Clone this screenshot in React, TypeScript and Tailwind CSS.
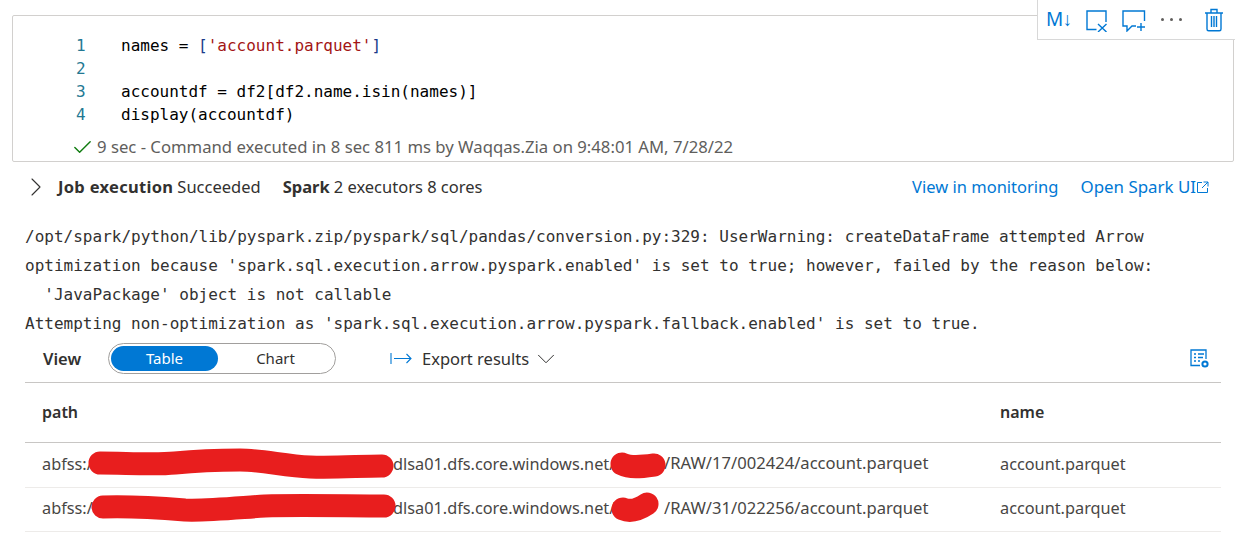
import { Check, ChevronDown, ChevronRight } from "lucide-react";

const sans = "font-['Noto_Sans',sans-serif]";
const mono = "font-['DejaVu_Sans_Mono',monospace]";

const outputLines = [
  "/opt/spark/python/lib/pyspark.zip/pyspark/sql/pandas/conversion.py:329: UserWarning: createDataFrame attempted Arrow",
  "optimization because 'spark.sql.execution.arrow.pyspark.enabled' is set to true; however, failed by the reason below:",
  "  'JavaPackage' object is not callable",
  "Attempting non-optimization as 'spark.sql.execution.arrow.pyspark.fallback.enabled' is set to true.",
];

const rows = [
  "/RAW/17/002424/account.parquet",
  "/RAW/31/022256/account.parquet",
];

function Toolbar() {
  return (
    <div className="absolute right-0 top-0 flex h-[40px] w-[198px] items-center border-b border-l border-[#d8d8d8] bg-white pl-[8px] text-[#0078d4]">
      <span className={`${sans} w-[26px] text-[19px] leading-none tracking-[-0.5px]`}>M↓</span>
      <svg className="ml-[14px]" width="22" height="24" viewBox="0 0 22 24" fill="none" stroke="currentColor" strokeWidth="1.4">
        <path d="M10.5 21.5H1V3h19v11" />
        <path d="M12 16l8.5 8M20.5 16L12 24" />
      </svg>
      <svg className="ml-[14px]" width="24" height="24" viewBox="0 0 24 24" fill="none" stroke="currentColor" strokeWidth="1.4">
        <path d="M22.5 13V3H1v15h4v5l5-5h4" />
        <path d="M15 19h8M19 15v8" />
      </svg>
      <span className="ml-[15px] flex w-[21px] justify-between">
        <i className="h-[3px] w-[3px] rounded-full bg-[#605e5c]" />
        <i className="h-[3px] w-[3px] rounded-full bg-[#605e5c]" />
        <i className="h-[3px] w-[3px] rounded-full bg-[#605e5c]" />
      </span>
      <svg className="ml-[22px]" width="20" height="24" viewBox="0 0 20 24" fill="none" stroke="currentColor" strokeWidth="1.4">
        <path d="M1 5h18M7 5V1.5h6V5M3 5v16c0 1 .6 1.8 1.6 1.8h10.800c1 0 1.600-.8 1.600-1.800V5M7.500 8v11M10 8v11M12.500 8v11" />
      </svg>
    </div>
  );
}

function Scribbles() {
  return (
    <svg className="absolute left-0 top-0" width="1235" height="554" viewBox="0 0 1235 554" fill="none" stroke="#e81e1e" strokeLinecap="round" strokeLinejoin="round">
      <path d="M100 463C125 463 155 465 175 463C195 461 215 460 240 460C262 460 285 466 310 467C335 468 360 466 382 466" strokeWidth="23" />
      <path d="M103 507C130 506 160 508 185 510C205 511 235 508 265 506C295 505 350 506 384 506" strokeWidth="23" />
      <path d="M622 464C630 468 640 467 654 465" strokeWidth="23" />
      <path d="M623 509C630 512 638 510 647 504" strokeWidth="23" />
    </svg>
  );
}

function CellPath({ tail }: { tail: string }) {
  return (
    <div className="flex h-full items-center pb-[2px] pl-[17px] text-[16.300px] text-[#484644]">
      <span className="w-[351px]">abfss:/</span>
      <span className="w-[271px]">dlsa01.dfs.core.windows.net/</span>
      <span className="text-[16.600px]">{tail}</span>
    </div>
  );
}

export default function App() {
  return (
    <div className={`${sans} relative h-[554px] w-[1235px] overflow-hidden bg-white`}>
      <div className="pl-[12px] pr-px pt-[15px]">
        <div className="h-[147px] rounded-[2px] border border-[#d2d0ce] pt-[18px]">
          <div className={`${mono} text-[16px] leading-[23px] text-black`}>
            {[1, 2, 3, 4].map((n) => (
              <div key={n} className="flex h-[23px]">
                <span className="w-[108px] pl-[63px] text-[#237893]">{n}</span>
                {n === 1 && (
                  <span>
                    names = <span className="text-[#1a3a8a]">[</span>
                    <span className="text-[#a31515]">'account.parquet'</span>
                    <span className="text-[#1a3a8a]">]</span>
                  </span>
                )}
                {n === 3 && <span>accountdf = df2[df2.name.isin(names)]</span>}
                {n === 4 && <span>display(accountdf)</span>}
              </div>
            ))}
          </div>
          <div className="mt-[9px] flex h-[24px] items-center pl-[58px] text-[16.700px] text-[#605e5c]">
            <Check size={23} strokeWidth={1.5} className="mr-[3px] text-[#107c10]" />
            <span>9 sec - Command executed in 8 sec 811 ms by Waqqas.Zia on 9:48:01 AM, 7/28/22</span>
          </div>
        </div>
      </div>

      <div className="mt-[12px] flex h-[26px] items-center pl-[20px] text-[16.500px] text-[#323130]">
        <ChevronRight size={32} strokeWidth={0.8} className="mr-[6px] text-[#323130]" />
        <b className="font-bold tracking-[0.3px]">Job execution</b>
        <span className="ml-[4px]">Succeeded</span>
        <b className="ml-[22px] font-bold">Spark</b>
        <span className="ml-[4px]">2 executors 8 cores</span>
        <span className="ml-auto text-[#0078d4]">View in monitoring</span>
        <span className="ml-[22px] text-[16.900px] text-[#0078d4]">Open Spark UI</span>
        <svg className="mr-[26px]" width="13" height="13" viewBox="0 0 13 13" fill="none" stroke="#0078d4" strokeWidth="1">
          <path d="M6 1.500H1.500v10h10V7M7.500 1h4.500v4.500M12 1L6 7" />
        </svg>
      </div>

      <div className={`${mono} mt-[22px] whitespace-pre pl-[25px] text-[16px] leading-[29px] tracking-[0.01px] text-[#323130]`}>
        {outputLines.map((line) => (
          <div key={line}>{line}</div>
        ))}
      </div>

      <div className="mx-[25px] mt-[-2px] w-[1196px]">
        <div className="flex h-[47px] items-center border-b border-[#c8c6c4] pb-[1px] pl-[18px]">
          <span className="mt-[2px] w-[65px] text-[16.500px] font-semibold text-[#323130]">View</span>
          <div className="flex h-[31px] w-[228px] rounded-full border border-[#a19f9d] p-[2px] text-[15px]">
            <span className="flex h-[25px] w-[108px] items-center justify-center rounded-full bg-[#0078d4] text-white">Table</span>
            <span className="flex w-[116px] items-center justify-center text-[#323130]">Chart</span>
          </div>
          <svg className="ml-[54px]" width="22" height="13" viewBox="0 0 22 13" fill="none" stroke="#0078d4" strokeWidth="1.1">
            <path d="M1 1v11M4 6.500h17M16.500 2l4.500 4.500-4.500 4.500" />
          </svg>
          <span className="ml-[10px] mt-[2px] text-[16.500px] text-[#323130]">Export results</span>
          <ChevronDown size={30} strokeWidth={0.8} className="ml-[2px] text-[#323130]" />
          <svg className="ml-auto mr-[11px]" width="20" height="20" viewBox="0 0 20 20" fill="none" stroke="#0078d4" strokeWidth="1.300">
            <path d="M10 16.500H1V1h15v9M4 5h2M8 5h6M4 8.500h2M8 8.500h5M4 12h2M8 12h2" />
            <circle cx="15" cy="15" r="2.600" strokeWidth="2" />
          </svg>
        </div>
        <div className="grid h-[60px] grid-cols-[958px_1fr] items-center border-b border-[#c8c6c4] pb-[2px] text-[16px] font-semibold text-[#323130]">
          <span className="pl-[17px]">path</span>
          <span className="pl-[17px]">name</span>
        </div>
        {rows.map((tail) => (
          <div key={tail} className="grid h-[44.500px] grid-cols-[958px_1fr] border-b border-[#edebe9]">
            <CellPath tail={tail} />
            <span className="flex items-center pb-[2px] pl-[17px] text-[16.300px] text-[#484644]">account.parquet</span>
          </div>
        ))}
      </div>

      <Toolbar />
      <Scribbles />
    </div>
  );
}
